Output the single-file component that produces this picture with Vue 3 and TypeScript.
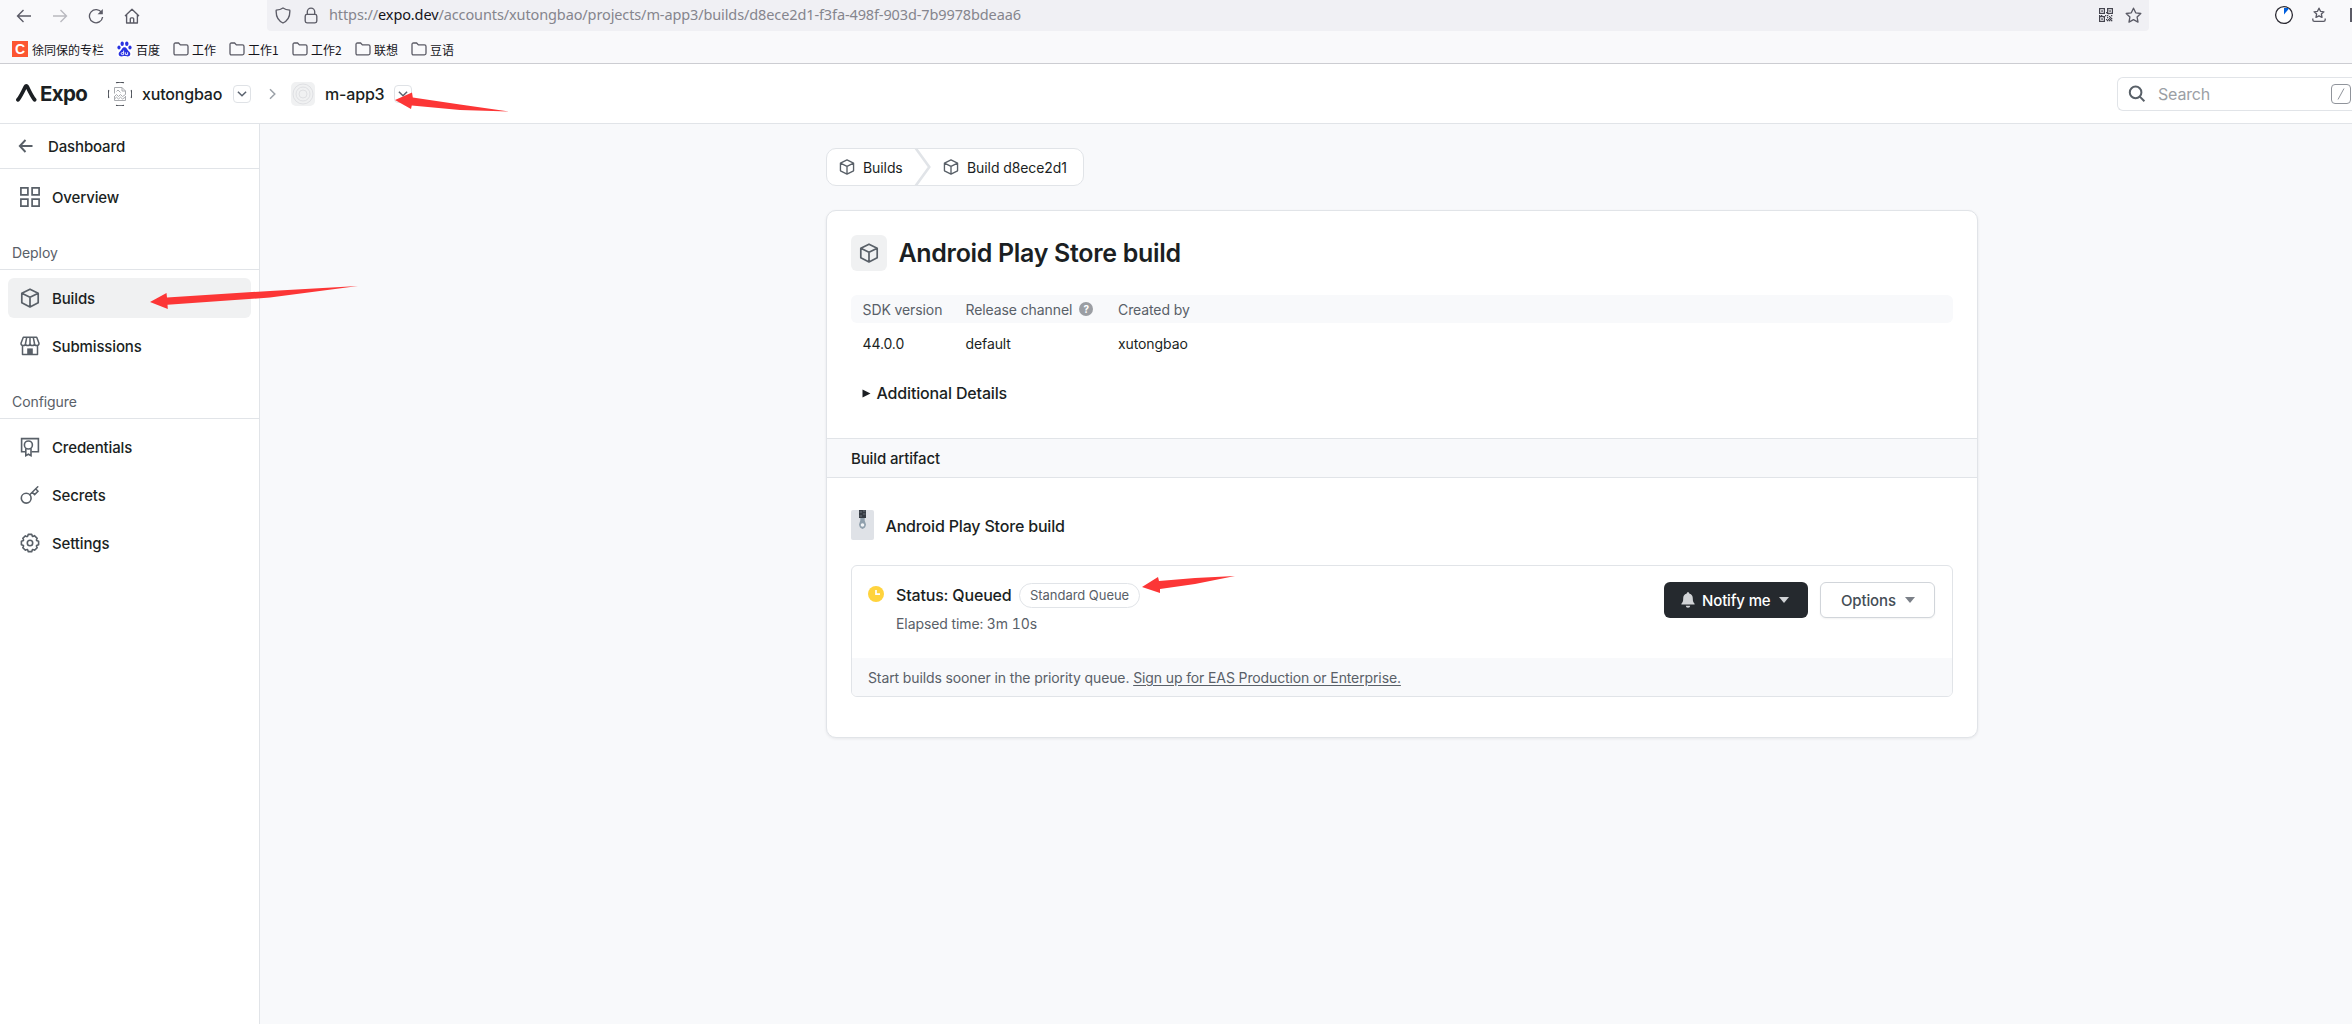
<script setup lang="ts">
interface Bookmark { label: string; width: number }
interface NavItem { label: string; icon: string; active?: boolean }
interface Arrow { box: string; points: string; cls: string }

const folders: Bookmark[] = [
  { label: '工作', width: 56 },
  { label: '工作1', width: 63 },
  { label: '工作2', width: 63 },
  { label: '联想', width: 56 },
  { label: '豆语', width: 56 },
]

const deploy: NavItem[] = [
  { label: 'Builds', icon: 'cube', active: true },
  { label: 'Submissions', icon: 'store' },
]

const configure: NavItem[] = [
  { label: 'Credentials', icon: 'cert' },
  { label: 'Secrets', icon: 'key' },
  { label: 'Settings', icon: 'gear' },
]

const arrows: Arrow[] = [
  { cls: 'arrow-app', box: '394 90 120 24', points: '395,100 412,92.6 412.8,97.6 460,104.5 509,111.5 460,110 411.8,105.4 411,109' },
  { cls: 'arrow-builds', box: '148 282 214 32', points: '150,302 166.5,293 167,297.4 270,291 358,286 270,297.5 167.5,304.8 167.8,309' },
  { cls: 'arrow-queue', box: '1140 572 100 26', points: '1142,587 1158,577 1159,581 1195,578 1235,576 1195,584 1160,589 1160,593' },
]

// Dark cells of the QR glyph in the address bar
const qrCells: number[][] = [[8, 0], [8, 2], [7, 4], [9, 5], [0, 7], [2, 7], [4, 8], [6, 7], [8, 7], [10, 8], [12, 7], [8, 9], [10, 10], [12, 10], [8, 12], [10, 12], [12, 12], [7, 11], [9, 11], [11, 9], [11, 11]]
</script>

<template>
  <div class="page">
    <svg class="defs" width="0" height="0">
      <symbol id="cube" viewBox="0 0 20 20">
        <path d="M10 1.2 18.2 5.2V14.8L10 18.9 1.8 14.8V5.2ZM1.8 5.2 10 9.2 18.2 5.2M10 9.2V18.9" fill="none" stroke="currentColor" stroke-width="1.7" stroke-linejoin="round" />
      </symbol>
      <symbol id="store" viewBox="0 0 20 20">
        <path d="M3.3 1.2H16.7L19 7.2C19 8.7 17.9 9.6 16.7 9.6S14.5 8.7 14.5 7.5C14.5 8.7 13.5 9.6 12.3 9.6S10 8.7 10 7.5C10 8.7 9 9.6 7.8 9.6S5.5 8.7 5.5 7.5C5.5 8.7 4.5 9.6 3.3 9.6S1 8.7 1 7.2ZM6.8 1.2 5.5 7.5M10 1.2V7.5M13.2 1.2 14.5 7.5M2.5 9.5V18.4H17.5V9.5" fill="none" stroke="currentColor" stroke-width="1.5" stroke-linejoin="round" />
        <path d="M7.2 12.4H12.8V18.4H7.2Z" fill="currentColor" />
      </symbol>
      <symbol id="cert" viewBox="0 0 20 20">
        <path d="M5.5 14.8H1.6V1.6H18.4V14.8H11.5" fill="none" stroke="currentColor" stroke-width="1.6" />
        <circle cx="8.4" cy="8" r="4" fill="none" stroke="currentColor" stroke-width="1.6" />
        <path d="M5.8 11.5V18.6L8.4 17.2 11 18.6V11.5" fill="none" stroke="currentColor" stroke-width="1.6" />
      </symbol>
      <symbol id="key" viewBox="0 0 20 20">
        <circle cx="6.2" cy="13.2" r="4.9" fill="none" stroke="currentColor" stroke-width="1.6" />
        <path d="M9.7 9.7 17.8 1.7M12.2 7.2 14.6 9.6 18 6.2 15.6 3.8" fill="none" stroke="currentColor" stroke-width="1.5" stroke-linecap="round" />
      </symbol>
      <symbol id="gear" viewBox="0 0 20 20">
        <path d="M8.3 1.4H11.7L12.5 3.5Q13.2 3.8 14.4 2.7L17.2 5.4Q16.2 6.8 16.5 7.5L18.6 8.3V11.7L16.5 12.5Q16.2 13.2 17.2 14.6L14.6 17.2Q13.2 16.2 12.5 16.5L11.7 18.6H8.3L7.5 16.5Q6.8 16.2 5.4 17.2L2.8 14.6Q3.8 13.2 3.5 12.5L1.4 11.7V8.3L3.5 7.5Q3.8 6.8 2.8 5.4L5.4 2.8Q6.8 3.8 7.5 3.5Z" fill="none" stroke="currentColor" stroke-width="1.6" stroke-linejoin="round" />
        <circle cx="10" cy="10" r="2.7" fill="none" stroke="currentColor" stroke-width="1.6" />
      </symbol>
      <symbol id="grid" viewBox="0 0 20 20">
        <path d="M.9.9H7.9V7.9H.9ZM12.1.9H19.1V7.9H12.1ZM.9 12.1H7.9V19.1H.9ZM12.1 12.1H19.1V19.1H12.1Z" fill="none" stroke="currentColor" stroke-width="1.7" />
      </symbol>
      <symbol id="folder" viewBox="0 0 16 14">
        <path d="M1 2.5Q1 1 2.5 1H5.6L7.4 2.9H13.5Q15 2.9 15 4.4V11.3Q15 12.8 13.5 12.8H2.5Q1 12.8 1 11.3Z" fill="none" stroke="currentColor" stroke-width="1.3" />
      </symbol>
    </svg>

    <div class="toolbar">
      <div class="nav-buttons">
        <svg width="16" height="16" viewBox="0 0 16 16"><path d="M15 8H1.5M7.5 2 1.5 8 7.5 14" /></svg>
        <svg class="off" width="16" height="16" viewBox="0 0 16 16"><path d="M1 8H14.5M8.5 2 14.5 8 8.5 14" /></svg>
        <svg width="16" height="16" viewBox="0 0 16 16"><path d="M13.7 4.8A6.6 6.6 0 1 0 14.6 9" /><path d="M14.8 1V6.2H9.6Z" fill="#5b5b66" stroke="none" /></svg>
        <svg width="16" height="16" viewBox="0 0 16 16"><path d="M1 8 8 1.2 15 8M2.6 7V15H13.4V7M6.3 15V10.8Q6.3 9.8 7.3 9.8H8.7Q9.7 9.8 9.7 10.8V15" stroke-linejoin="round" /></svg>
      </div>
      <div class="url-bar">
        <svg width="16" height="17" viewBox="0 0 16 17"><path d="M8 1C10 2.4 12.3 3 14.8 3.2 15.2 9.5 12.8 13.8 8 16 3.2 13.8.8 9.5 1.2 3.2 3.7 3 6 2.4 8 1Z" stroke-linejoin="round" /></svg>
        <svg class="lock" width="14" height="17" viewBox="0 0 14 17"><path d="M3.3 7.4V4.8A3.7 3.7 0 0 1 10.7 4.8V7.4" /><rect x="1.2" y="7.4" width="11.6" height="8.4" rx="1.8" /></svg>
        <span class="url">https://<b>expo.dev</b>/accounts/xutongbao/projects/m-app3/builds/d8ece2d1-f3fa-498f-903d-7b9978bdeaa6</span>
        <svg class="qr" width="14" height="14" viewBox="0 0 14 14">
          <g fill="none" stroke="#45454f" stroke-width="1.2"><rect x=".6" y=".6" width="4.8" height="4.8" /><rect x="8.6" y=".6" width="4.8" height="4.8" /><rect x=".6" y="8.6" width="4.8" height="4.8" /></g>
          <g fill="#45454f" stroke="none">
            <rect x="2.3" y="2.3" width="1.5" height="1.5" /><rect x="10.3" y="2.3" width="1.5" height="1.5" /><rect x="2.3" y="10.3" width="1.5" height="1.5" />
            <rect v-for="(c, i) in qrCells" :key="i" :x="c[0]" :y="c[1]" width="1.3" height="1.3" />
          </g>
        </svg>
        <svg class="star" width="17" height="17" viewBox="0 0 17 17"><path d="M8.5 1.2 10.7 5.8 15.8 6.5 12.1 10 13 15.1 8.5 12.6 4 15.1 4.9 10 1.2 6.5 6.3 5.8Z" stroke-linejoin="round" /></svg>
      </div>
      <svg class="timer" width="20" height="20" viewBox="0 0 20 20"><circle cx="10" cy="10" r="8.4" fill="#fff" stroke="#2b2a33" stroke-width="1.3" /><path d="M10 9.5V3H14.2V4.6Z" fill="#0060df" stroke="none" /></svg>
      <svg class="saved" width="14" height="16" viewBox="0 0 14 16"><path d="M7 1.2 8.5 4.3 11.9 4.8 9.4 7.1 10 10.4 7 8.8 4 10.4 4.6 7.1 2.1 4.8 5.5 4.3ZM.8 11.6V12.8Q.8 14.4 2.4 14.4H11.6Q13.2 14.4 13.2 12.8V11.6" stroke-linejoin="round" /></svg>
      <div class="toolbar-edge"></div>
    </div>

    <div class="bookmarks">
      <span class="bm csdn"><i>C</i>徐同保的专栏</span>
      <span class="bm baidu">
        <svg width="15" height="16" viewBox="0 0 15 16"><rect width="15" height="16" fill="#fff" /><g fill="#2932e1"><ellipse cx="5.2" cy="2.8" rx="1.7" ry="2.3" /><ellipse cx="9.8" cy="2.8" rx="1.7" ry="2.3" /><ellipse cx="2" cy="6.6" rx="1.6" ry="2" /><ellipse cx="13" cy="6.6" rx="1.6" ry="2" /><path d="M7.5 6.3C10 6.3 10 9 12 10.4 14.4 12.3 13.2 15.4 10.6 15.4 9.4 15.4 8.9 15 7.5 15S5.6 15.4 4.4 15.4C1.8 15.4.6 12.3 3 10.4 5 9 5 6.3 7.5 6.3Z" /></g><path d="M6.6 9.6V13.6H5.2Q4.2 13.6 4.2 12.6T5.2 11.6H6.4M8.3 11.3V13Q8.3 13.6 9 13.6H10.6V11.3" fill="none" stroke="#fff" stroke-width=".9" /></svg>
        百度
      </span>
      <span v-for="f in folders" :key="f.label" class="bm folder" :style="{ width: f.width + 'px' }">
        <svg width="16" height="14"><use href="#folder" /></svg>{{ f.label }}
      </span>
    </div>

    <header class="site-header">
      <div class="logo">
        <svg width="21" height="18" viewBox="0 0 21 18"><path d="M2 15.8C4.6 12.6 7 7.6 9.2 3Q10.3 1 11.4 3C13.6 7.6 16 12.6 18.6 15.8" fill="none" stroke="#1b1f23" stroke-width="3.8" stroke-linecap="round" stroke-linejoin="round" /></svg>
        <span>Expo</span>
      </div>
      <div class="owner-avatar">
        <svg width="24" height="24" viewBox="0 0 24 24"><path d="M.8 8Q-.2 12 .8 16M23.2 8Q24.2 12 23.2 16M8 .8Q12-.3 16 .8M8 23.2Q12 24.3 16 23.2" fill="none" stroke="#4b4f57" stroke-width="1.1" /><path d="M6.5 11.5V5.5H14L17.5 9V12.5M14 5.5V9H17.5M6.5 18.5H17.5M6.5 14.5 8.5 12.5 10.5 14.5 12.5 12.5 14.5 14.5 17.5 12.5M6.5 17 8.5 15.2 10.5 17 12.5 15.2 14.5 17 17.5 15M6.5 14V18.5M17.5 14V18.5M8.5 9.5 10 8 12.5 10.5" fill="none" stroke="#a9abaf" stroke-width="1" /></svg>
      </div>
      <span class="owner">xutongbao</span>
      <span class="drop"><svg width="10" height="6" viewBox="0 0 10 6"><path d="M.9.8 5 4.8 9.1.8" fill="none" stroke="#5a626e" stroke-width="1.5" /></svg></span>
      <svg class="sep" width="7" height="12" viewBox="0 0 7 12"><path d="M1 1.2 5.8 6 1 10.8" fill="none" stroke="#9ba1a8" stroke-width="1.5" /></svg>
      <div class="app-avatar"><svg width="24" height="24" viewBox="0 0 24 24" fill="none" stroke="#dfe0e3" stroke-width="1"><circle cx="12" cy="12" r="10" /><circle cx="12" cy="12" r="7" /><circle cx="12" cy="12" r="4" /></svg></div>
      <span class="app-name">m-app3</span>
      <span class="drop"><svg width="10" height="6" viewBox="0 0 10 6"><path d="M.9.8 5 4.8 9.1.8" fill="none" stroke="#5a626e" stroke-width="1.5" /></svg></span>
      <div class="search">
        <svg width="18" height="18" viewBox="0 0 18 18"><circle cx="7.6" cy="7.4" r="5.8" fill="none" stroke="#596068" stroke-width="2" /><path d="M11.8 11.6 16.4 16.2" stroke="#596068" stroke-width="2" /></svg>
        <span>Search</span>
        <svg class="slash" width="20" height="20" viewBox="0 0 20 20"><rect x=".5" y=".5" width="19" height="19" rx="3.5" fill="#fff" stroke="#90949b" /><path d="M13 4.5 7 15.5" stroke="#90949b" /></svg>
      </div>
    </header>

    <div class="body">
      <aside>
        <div class="dash">
          <svg width="16" height="16" viewBox="0 0 16 16"><path d="M14.5 8H2M7.5 2 1.8 8 7.5 14" fill="none" stroke="#596068" stroke-width="1.9" /></svg>
          Dashboard
        </div>
        <div class="nav-item"><svg width="20" height="20"><use href="#grid" /></svg>Overview</div>
        <div class="group">Deploy</div>
        <div v-for="n in deploy" :key="n.label" class="nav-item" :class="{ active: n.active }">
          <svg width="20" height="20"><use :href="'#' + n.icon" /></svg>{{ n.label }}
        </div>
        <div class="group">Configure</div>
        <div v-for="n in configure" :key="n.label" class="nav-item">
          <svg width="20" height="20"><use :href="'#' + n.icon" /></svg>{{ n.label }}
        </div>
      </aside>

      <main>
        <div class="crumbs">
          <span class="crumb one"><svg width="16" height="16"><use href="#cube" /></svg>Builds</span>
          <svg class="crumb-sep" width="17" height="36" viewBox="0 0 17 36"><path d="M1.5-1 15.3 18 1.5 37" fill="none" stroke="#e1e4e8" stroke-width="2.6" /></svg>
          <span class="crumb"><svg width="16" height="16"><use href="#cube" /></svg>Build d8ece2d1</span>
        </div>

        <section class="card">
          <div class="title-row">
            <span class="title-icon"><svg width="20" height="20"><use href="#cube" /></svg></span>
            <h1>Android Play Store build</h1>
          </div>
          <div class="table head">
            <span class="c1">SDK version</span>
            <span class="c2">Release channel<i class="help">?</i></span>
            <span>Created by</span>
          </div>
          <div class="table">
            <span class="c1">44.0.0</span>
            <span class="c2">default</span>
            <span>xutongbao</span>
          </div>
          <div class="details">
            <svg width="9" height="9" viewBox="0 0 9 9"><path d="M.5.5 8.5 4.5.5 8.5Z" fill="#1b1f23" /></svg>
            <span>Additional Details</span>
          </div>
          <div class="section-bar">Build artifact</div>
          <div class="artifact">
            <svg width="23" height="30" viewBox="0 0 23 30">
              <rect width="23" height="30" rx="2" fill="#dfe2e7" />
              <rect x="8" width="7" height="8" fill="#353b43" /><path d="M8.5 2H11M12 4H14.5M8.5 6H11M12 1H14.5" stroke="#79828c" stroke-width=".8" />
              <path d="M9.3 8H13.7V10.5L15 14.5Q14.6 18 11.5 19 8.4 18 8 14.5L9.3 10.5Z" fill="#90a0ad" /><circle cx="11.5" cy="15" r="1.8" fill="#f1f4f7" />
            </svg>
            <span>Android Play Store build</span>
          </div>
          <div class="status-box">
            <div class="status-top">
              <svg class="clock" width="16" height="16" viewBox="0 0 16 16"><circle cx="8" cy="8" r="8" fill="#ffd33d" /><path d="M8 4V8.2H12" fill="none" stroke="#fff" stroke-width="1.7" /></svg>
              <div class="status-text">
                <div class="status-line"><span class="status">Status: Queued</span><span class="pill">Standard Queue</span></div>
                <div class="elapsed">Elapsed time: 3m 10s</div>
              </div>
              <button class="btn dark">
                <svg width="14" height="16" viewBox="0 0 14 16"><path d="M7 .3C7.8.3 8.2.8 8.2 1.5 11 2.1 11.8 4.3 11.8 6.5 11.8 9.5 12.4 10.6 13.6 11.7V12.4H.4V11.7C1.6 10.6 2.2 9.5 2.2 6.5 2.2 4.3 3 2.1 5.8 1.5 5.8.8 6.2.3 7 .3ZM4.8 13.8H9.2A2.2 1.9 0 0 1 4.8 13.8Z" fill="#d1d3d6" /></svg>
                <span>Notify me</span>
                <svg class="caret" width="10" height="6" viewBox="0 0 10 6"><path d="M0 0H10L5 6Z" fill="#d1d3d6" /></svg>
              </button>
              <button class="btn light">
                <span>Options</span>
                <svg class="caret" width="10" height="6" viewBox="0 0 10 6"><path d="M0 0H10L5 6Z" fill="#7b8088" /></svg>
              </button>
            </div>
            <div class="status-foot">Start builds sooner in the priority queue. <u>Sign up for EAS Production or Enterprise.</u></div>
          </div>
        </section>
      </main>
    </div>

    <svg v-for="a in arrows" :key="a.cls" class="arrow" :class="a.cls" :viewBox="a.box"><polygon :points="a.points" fill="#fc3636" /></svg>
  </div>
</template>

<style>
html, body { margin: 0; overflow: hidden; }
</style>

<style scoped>
.page { position: relative; width: 2352px; height: 1024px; overflow: hidden; display: flex; flex-direction: column; background: #fff; color: #1b1f23; font-family: Inter, "Liberation Sans", sans-serif; font-size: 15px; }
.page * { box-sizing: border-box; }
svg { flex: none; display: block; }
.defs { position: absolute; }

.toolbar { height: 32px; flex: none; display: flex; background: #f9f9fb; }
.toolbar > * { flex: none; }
.toolbar > svg, .nav-buttons svg, .url-bar > svg { fill: none; stroke: #5b5b66; stroke-width: 1.35; }
.nav-buttons { width: 267px; height: 31px; padding-left: 16px; display: flex; align-items: center; gap: 20px; }
.nav-buttons .off { stroke: #b9b9bf; }
.url-bar { width: 1882px; height: 31px; background: #f0f0f4; border-radius: 0 0 4px 4px; display: flex; align-items: center; padding: 0 7px 1px 8px; }
.lock { margin-left: 13px; }
.url { margin-left: 11px; flex: 1; white-space: nowrap; font-family: "Noto Sans", sans-serif; font-size: 14.5px; letter-spacing: -0.115px; line-height: 20px; margin-top: -2px; color: #85858d; }
.url b { font-weight: 400; color: #15141a; }
.url-bar .qr { stroke: none; }
.star { margin-left: 12px; }
.timer { margin: 5px 0 0 125px; }
.saved { margin: 7px 0 0 18px; }
.toolbar-edge { width: 2px; height: 14px; margin: 8px 0 0 24px; background: #5b5b66; }

.bookmarks { height: 32px; flex: none; display: flex; align-items: center; padding: 0 0 0 12px; background: #f9f9fb; border-bottom: 1px solid #cccdd2; color: #15141a; font: 12px "Noto Sans CJK SC", sans-serif; }
.bm { display: flex; align-items: center; white-space: nowrap; height: 20px; margin-top: 3px; }
.csdn i { width: 16px; height: 16px; margin-right: 4px; background: #fc5531; color: #fff; font: 700 14px/16px "Liberation Sans", sans-serif; text-align: center; }
.csdn { width: 105px; }
.baidu { width: 56px; gap: 4px; }
.folder { gap: 3px; color: #15141a; }
.folder svg { color: #5b5b66; }

.site-header { height: 60px; flex: none; display: flex; align-items: center; padding: 1px 0 0 16px; border-bottom: 1px solid #e1e4e8; font-size: 16px; font-weight: 500; letter-spacing: -0.176px; }
.site-header > * { flex: none; }
.logo { width: 92px; display: flex; align-items: center; gap: 3px; font: 700 20.5px/24px Inter, sans-serif; letter-spacing: -0.7px; }
.logo svg { margin-top: -2px; }
.owner { width: 91px; margin-left: 10px; }
.drop { width: 18px; height: 18px; border: 1px solid #dfe2e6; border-radius: 4px; background: #fff; display: flex; align-items: center; justify-content: center; }
.sep { margin: 0 15px 0 18px; }
.app-avatar { background: #f0f1f2; border-radius: 5px; }
.app-name { width: 69px; margin-left: 10px; }
.site-header .search { margin-left: auto; width: 235px; height: 34px; border: 1px solid #e1e4e8; border-right: 0; border-radius: 6px 0 0 6px; display: flex; align-items: center; padding: 0 1px 0 10px; }
.search span { margin-left: 12px; flex: 1; font-weight: 400; color: #9b9fa5; }

.body { flex: 1; display: flex; min-height: 0; }
aside { width: 260px; flex: none; border-right: 1px solid #e1e4e8; font-weight: 500; letter-spacing: -0.135px; }
.dash { height: 45px; border-bottom: 1px solid #e1e4e8; display: flex; align-items: center; gap: 14px; padding: 0 0 0 18px; }
.nav-item { height: 40px; margin: 8px 8px 0; padding-left: 12px; display: flex; align-items: center; gap: 12px; border-radius: 6px; }
.nav-item svg { color: #596068; }
.nav-item.active { background: #f0f1f2; }
.group { height: 53px; padding: 26px 12px 0; border-bottom: 1px solid #e1e4e8; color: #596068; font-size: 14px; font-weight: 400; line-height: 20px; letter-spacing: -0.084px; }

main { flex: 1; background: #f8f9fb; padding: 24px 374px 0 566px; }
.crumbs { width: 258px; height: 38px; border: 1px solid #e1e4e8; border-radius: 10px; background: #fff; display: flex; align-items: center; padding-left: 12px; font-size: 14px; letter-spacing: -0.084px; overflow: hidden; }
.crumb { display: flex; align-items: center; gap: 8px; white-space: nowrap; }
.crumb svg, .title-icon svg { color: #596068; }
.crumb.one { width: 75px; }
.crumb-sep { margin-right: 12px; }
.card { width: 1152px; height: 528px; margin-top: 24px; background: #fff; border: 1px solid #e1e4e8; border-radius: 10px; box-shadow: 0 1px 3px rgba(27, 31, 35, .08); }
.title-row { display: flex; align-items: center; gap: 11.5px; margin: 24px 24px 0; height: 36px; }
.title-icon { width: 36px; height: 36px; border-radius: 6px; background: #f0f1f2; display: flex; align-items: center; justify-content: center; }
h1 { margin: 0; font-size: 25px; font-weight: 600; letter-spacing: -0.32px; }
.table { height: 28px; margin: 6px 24px 0; padding-left: 11.5px; display: flex; align-items: center; font-size: 14px; letter-spacing: -0.1px; }
.table.head { margin-top: 24px; background: #f8f9fb; border-radius: 6px; color: #596068; }
.c1 { width: 103px; }
.c2 { width: 152.5px; display: flex; align-items: center; gap: 7px; }
.help { width: 14px; height: 14px; border-radius: 50%; background: #9b9ea3; color: #fff; font: 700 10px/14px Inter, sans-serif; text-align: center; }
.details { display: flex; align-items: center; height: 24px; margin: 24px 24px 0 35px; gap: 5.5px; font-size: 16px; font-weight: 500; letter-spacing: -0.16px; }
.section-bar { height: 40px; margin-top: 33px; border: solid #e1e4e8; border-width: 1px 0; background: #f8f9fb; padding-left: 24px; line-height: 40px; font-weight: 500; letter-spacing: -0.135px; }
.artifact { display: flex; align-items: center; height: 30px; margin: 32px 24px 0; gap: 11.5px; font-size: 16px; font-weight: 500; letter-spacing: -0.176px; }
.artifact span { padding-top: 2px; }
.status-box { height: 132px; margin: 25px 24px 0; border: 1px solid #e1e4e8; border-radius: 6px; overflow: hidden; }
.status-top { height: 92px; display: flex; align-items: flex-start; padding: 16px 17px 0 16px; }
.clock { margin-top: 4px; }
.status-text { flex: 1; margin-left: 12px; }
.status-line { display: flex; align-items: center; height: 26px; gap: 7.5px; font-size: 16px; font-weight: 500; letter-spacing: -0.176px; }
.pill { height: 25px; border: 1px solid #e1e4e8; border-radius: 13px; padding: 0 10px; color: #596068; font-size: 13px; font-weight: 400; line-height: 23px; letter-spacing: -0.04px; }
.elapsed { margin-top: 6px; line-height: 20px; font-size: 14px; letter-spacing: -0.084px; font-variant-numeric: tabular-nums; color: #596068; }
.btn { height: 36px; display: flex; align-items: center; border-radius: 6px; font: 500 15px Inter, sans-serif; letter-spacing: -0.135px; padding: 0; }
.dark { width: 144px; background: #25292e; border: 0; color: #fff; padding-left: 17px; gap: 7px; }
.light { width: 115px; margin-left: 12px; background: #fff; border: 1px solid #d1d5da; color: #444d56; padding-left: 20px; gap: 9px; box-shadow: 0 1px 2px rgba(27, 31, 35, .06); }
.dark .caret { margin: -1px 0 0 1px; }
.light .caret { margin-top: -1px; }
.status-foot { height: 38px; background: #f8f9fb; padding-left: 16px; line-height: 40px; font-size: 14px; letter-spacing: -0.118px; color: #596068; }
.status-foot u { text-underline-offset: 2px; }

.arrow { position: absolute; }
.arrow-app { left: 394px; top: 90px; width: 120px; height: 24px; }
.arrow-builds { left: 148px; top: 282px; width: 214px; height: 32px; }
.arrow-queue { left: 1140px; top: 572px; width: 100px; height: 26px; }
</style>
